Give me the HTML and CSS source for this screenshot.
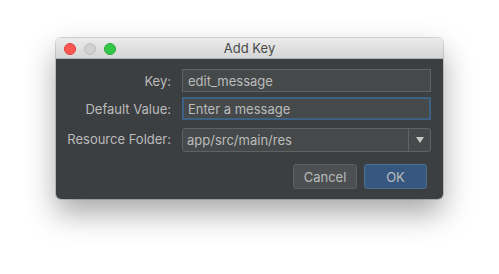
FILE: index.html
```html
<!DOCTYPE html>
<html lang="en">
<head>
<meta charset="UTF-8" />
<title>Add Key</title>
<link rel="stylesheet" href="styles.css">
</head>
<body>

<!-- DIALOG -->
<div class="window">
  <div class="titlebar">
    <div class="lights">
      <span class="light red"></span>
      <span class="light gray"></span>
      <span class="light green"></span>
    </div>
    <div class="title">Add Key</div>
  </div>

  <div class="content">
    <div class="form">
      <label class="label" for="key">Key:</label>
      <input class="field" id="key" type="text" value="edit_message">

      <label class="label" for="default">Default Value:</label>
      <input class="field focused" id="default" type="text" placeholder="Enter a message">

      <label class="label" for="folder">Resource Folder:</label>
      <div class="combo" id="folder">
        <span class="combo-text">app/src/main/res</span>
        <span class="combo-arrow"><span class="triangle"></span></span>
      </div>
    </div>

    <div class="actions">
      <button class="btn">Cancel</button>
      <button class="btn btn-default">OK</button>
    </div>
  </div>
</div>

</body>
</html>
```

FILE: styles.css
```css
/* Reset */
*, *::before, *::after {
  box-sizing: border-box;
}
html, body {
  height: 100%;
}
body, input, button, label {
  margin: 0;
  padding: 0;
  font-family: 'Inter', 'Open Sans', sans-serif;
}

:root {
  --panel: #3c3f41;
  --field: #45494a;
  --field-border: #5e6264;
  --text: #bbbbbb;
  --focus: #3d6185;
}

body {
  background: #ffffff;
  padding: 38px 0 0 56px;
}

/* Window */
.window {
  width: 387px;
  height: 161px;
  border-radius: 5px;
  overflow: hidden;
  box-shadow: 0 14px 30px rgba(0,0,0,0.35), 0 0 0 1px rgba(0,0,0,0.15);
  display: flex;
  flex-direction: column;
}
.titlebar {
  height: 21px;
  background: linear-gradient(#ebebeb, #d5d5d5);
  border-bottom: 1px solid #b4b4b4;
  position: relative;
  display: flex;
  align-items: center;
  justify-content: center;
}
.lights {
  position: absolute;
  left: 8px;
  top: 5px;
  display: flex;
  gap: 8px;
}
.light {
  width: 12px;
  height: 12px;
  border-radius: 50%;
}
.light.red {
  background: #fc5753;
  border: 1px solid #df3d3a;
}
.light.gray {
  background: #d0d0d0;
  border: 1px solid #bdbdbd;
}
.light.green {
  background: #33c748;
  border: 1px solid #27aa35;
}
.title {
  font-size: 13px;
  color: #4a4a4a;
}

/* Content */
.content {
  flex: 1;
  background: var(--panel);
  padding: 10px 12px 0 0;
}
.form {
  display: grid;
  grid-template-columns: 115px 249px;
  column-gap: 11px;
  row-gap: 5px;
  align-items: center;
}
.label {
  text-align: right;
  font-size: 13px;
  color: var(--text);
}
.field, .combo {
  height: 23px;
  background: var(--field);
  border: 1px solid var(--field-border);
  color: var(--text);
  font-size: 13px;
  padding: 0 5px;
  outline: none;
}
.field::placeholder {
  color: var(--text);
}
.field.focused {
  border: 2px solid var(--focus);
  padding: 0 4px;
}
.combo {
  display: flex;
  align-items: center;
  padding: 0 0 0 4px;
  border-radius: 3px;
  margin-top: 3px;
  height: 24px;
}
.combo-text {
  flex: 1;
}
.combo-arrow {
  width: 22px;
  height: 100%;
  border-left: 1px solid var(--field-border);
  display: flex;
  align-items: center;
  justify-content: center;
}
.triangle {
  width: 0;
  height: 0;
  border-left: 4px solid transparent;
  border-right: 4px solid transparent;
  border-top: 6px solid #c8c8c8;
}

/* Buttons */
.actions {
  display: flex;
  justify-content: flex-end;
  gap: 7px;
  padding: 0 4px 0 0;
  margin-top: 12px;
}
.btn {
  height: 25px;
  width: 64px;
  border-radius: 3px;
  background: #4c5052;
  border: 1px solid #5e6060;
  color: var(--text);
  font-size: 13px;
}
.btn-default {
  width: 63px;
  background: #365880;
  border-color: #4c708c;
}
```
